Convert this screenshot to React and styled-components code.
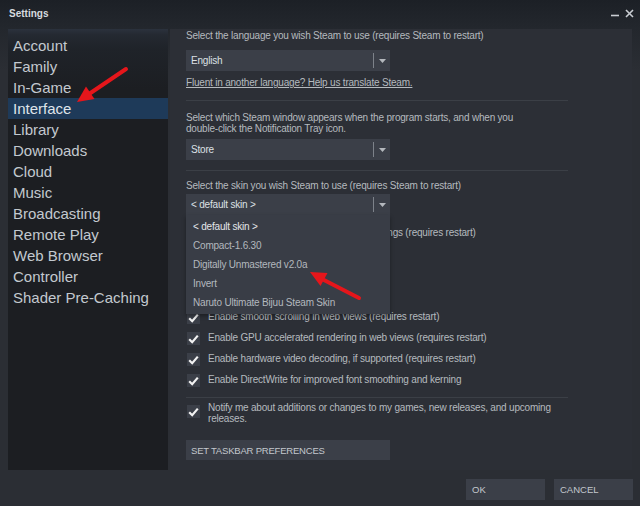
import styled, { createGlobalStyle } from 'styled-components'

const GlobalStyle = createGlobalStyle`
  html, body {
    margin: 0;
    padding: 0;
    background: #2b2e34;
  }
  body {
    font-family: "Liberation Sans", Arial, sans-serif;
  }
`

const Window = styled.div`
  position: relative;
  width: 640px;
  height: 506px;
  display: flex;
  flex-direction: column;
  overflow: hidden;
  background: linear-gradient(180deg, #1c2026 0px, #23272d 28px, #2b2e34 70px, #2b2e34 100%);
`

const TitleBar = styled.div`
  height: 29px;
  display: flex;
  align-items: center;
  justify-content: space-between;
  padding: 0 6px 3px 9px;
  box-sizing: border-box;

  .title {
    font-size: 10px;
    font-weight: bold;
    color: #d6dadf;
  }

  .controls {
    display: flex;
    align-items: center;
    gap: 6px;
  }
`

const Main = styled.div`
  display: flex;
  gap: 2px;
  height: 441px;
  padding: 0 8px;
`

const Sidebar = styled.nav`
  width: 160px;
  flex: none;
  display: flex;
  flex-direction: column;
  padding-top: 6px;
  box-sizing: border-box;
  background: linear-gradient(180deg, #2b323d 0px, #242931 6px, #1f2329 20px, #1c1e22 60px);
`

const NavItem = styled.div`
  height: 21px;
  line-height: 21px;
  padding-left: 5px;
  font-size: 15px;
  color: ${({ $active }) => ($active ? '#dfe4ea' : '#c3c9cf')};
  background: ${({ $active }) => ($active ? '#1e3a59' : 'transparent')};
`

const Content = styled.section`
  flex: 1;
  position: relative;
  padding: 1px 0 0 16px;
  background: #2c2f36;
  font-size: 10px;
  letter-spacing: -0.2px;
  color: #b5babf;
`

const Label = styled.div`
  line-height: 11px;
  max-width: 340px;
  margin-top: ${({ $mt }) => $mt || 0}px;
`

const Link = styled.div`
  margin-top: 6px;
  line-height: 11px;
  text-decoration: underline;
  color: #b5babf;
`

const Rule = styled.div`
  height: 1px;
  width: 382px;
  background: #3b3f46;
  margin-top: ${({ $mt }) => $mt}px;
`

const SelectWrap = styled.div`
  position: relative;
  width: 204px;
  margin-top: ${({ $mt }) => $mt}px;
`

const SelectBox = styled.div`
  height: 21px;
  display: flex;
  align-items: center;
  background: #3b3f48;
  color: #dde1e5;
  font-size: 10px;

  .value {
    flex: 1;
    padding-left: 5px;
  }

  .divider {
    width: 1px;
    height: 15px;
    background: #7d828a;
  }

  .arrow {
    width: 16px;
    display: flex;
    justify-content: center;
  }
`

const Menu = styled.div`
  position: absolute;
  left: 0;
  top: 100%;
  width: 204px;
  padding: 2px 0 2px;
  background: #393d46;
  box-shadow: 0 2px 4px rgba(0, 0, 0, 0.35);
  z-index: 2;
`

const MenuItem = styled.div`
  height: 19px;
  line-height: 19px;
  padding-left: 7px;
  font-size: 10px;
  color: ${({ $current }) => ($current ? '#e4e7ea' : '#b3b8be')};
`

const CheckList = styled.div`
  margin-top: 8px;
  display: flex;
  flex-direction: column;
`

const CheckRow = styled.div`
  display: flex;
  align-items: ${({ $multi }) => ($multi ? 'flex-start' : 'center')};
  gap: 8px;
  min-height: 21px;
  margin-top: ${({ $mt }) => $mt || 0}px;

  .text {
    line-height: 10.5px;
    max-width: 350px;
  }
`

const Box = styled.span`
  width: 13px;
  height: 13px;
  flex: none;
  margin-left: 1px;
  margin-top: ${({ $mt }) => $mt || 0}px;
  background: #3b3f48;
  display: flex;
  align-items: center;
  justify-content: center;
`

const WideButton = styled.div`
  width: 204px;
  height: 20px;
  margin-top: 16px;
  display: flex;
  align-items: center;
  padding-left: 5px;
  box-sizing: border-box;
  background: #3b3f48;
  color: #c3c8cd;
  font-size: 9.5px;
`

const Footer = styled.div`
  flex: 1;
  display: flex;
  justify-content: flex-end;
  align-items: flex-start;
  gap: 9px;
  padding: 9px 7px 0 0;
`

const DialogButton = styled.div`
  width: 79px;
  height: 21px;
  display: flex;
  align-items: center;
  padding-left: 6px;
  box-sizing: border-box;
  background: #3b3f48;
  color: #c3c8cd;
  font-size: 9.5px;
`

const Overlay = styled.svg`
  position: absolute;
  left: 0;
  top: 0;
  pointer-events: none;
  z-index: 5;
`

const navItems = [
  'Account', 'Family', 'In-Game', 'Interface', 'Library', 'Downloads', 'Cloud',
  'Music', 'Broadcasting', 'Remote Play', 'Web Browser', 'Controller', 'Shader Pre-Caching',
]

const skins = [
  '< default skin >',
  'Compact-1.6.30',
  'Digitally Unmastered v2.0a',
  'Invert',
  'Naruto Ultimate Bijuu Steam Skin',
]

const checks = [
  'Scale text and icons to match monitor settings (requires restart)',
  'Run Steam when my computer starts',
  'Start Steam in Big Picture Mode',
  'Display web address bars when available',
  'Enable smooth scrolling in web views (requires restart)',
  'Enable GPU accelerated rendering in web views (requires restart)',
  'Enable hardware video decoding, if supported (requires restart)',
  'Enable DirectWrite for improved font smoothing and kerning',
]

function Check() {
  return (
    <svg width="11" height="10" viewBox="0 0 11 10">
      <path d="M1.2 5.2 L4.2 8.2 L9.8 1.6" fill="none" stroke="#f2f2f2" strokeWidth="2.2" />
    </svg>
  )
}

function Select({ value, mt, children }) {
  return (
    <SelectWrap $mt={mt}>
      <SelectBox>
        <span className="value">{value}</span>
        <span className="divider" />
        <span className="arrow">
          <svg width="7" height="4" viewBox="0 0 7 4">
            <path d="M0 0 H7 L3.5 4 Z" fill="#b4b8bd" />
          </svg>
        </span>
      </SelectBox>
      {children}
    </SelectWrap>
  )
}

export default function App() {
  return (
    <>
      <GlobalStyle />
      <Window>
        <TitleBar>
          <span className="title">Settings</span>
          <span className="controls">
            <svg width="8" height="8" viewBox="0 0 8 8">
              <path d="M0 6.5 H8" stroke="#c9cdd2" strokeWidth="1.6" />
            </svg>
            <svg width="9" height="9" viewBox="0 0 9 9">
              <path d="M1 1 L8 8 M8 1 L1 8" stroke="#c9cdd2" strokeWidth="1.6" />
            </svg>
          </span>
        </TitleBar>

        <Main>
          <Sidebar>
            {navItems.map((item) => (
              <NavItem key={item} $active={item === 'Interface'}>{item}</NavItem>
            ))}
          </Sidebar>

          <Content>
            <Label>Select the language you wish Steam to use (requires Steam to restart)</Label>
            <Select value="English" mt={9} />
            <Link>Fluent in another language? Help us translate Steam.</Link>
            <Rule $mt={12} />

            <Label $mt={11}>
              Select which Steam window appears when the program starts, and when you double-click the Notification Tray icon.
            </Label>
            <Select value="Store" mt={5} />
            <Rule $mt={10} />

            <Label $mt={9}>Select the skin you wish Steam to use (requires Steam to restart)</Label>
            <Select value="< default skin >" mt={3}>
              <Menu>
                {skins.map((skin, i) => (
                  <MenuItem key={skin} $current={i === 0}>{skin}</MenuItem>
                ))}
              </Menu>
            </Select>

            <CheckList>
              {checks.map((c) => (
                <CheckRow key={c}>
                  <Box><Check /></Box>
                  <span className="text">{c}</span>
                </CheckRow>
              ))}
            </CheckList>
            <Rule $mt={6} />

            <CheckRow $multi $mt={5}>
              <Box $mt={2}><Check /></Box>
              <span className="text">
                Notify me about additions or changes to my games, new releases, and upcoming releases.
              </span>
            </CheckRow>

            <WideButton>SET TASKBAR PREFERENCES</WideButton>
          </Content>
        </Main>

        <Footer>
          <DialogButton>OK</DialogButton>
          <DialogButton>CANCEL</DialogButton>
        </Footer>

        <Overlay width="640" height="506" viewBox="0 0 640 506">
          <path d="M126 69 L89 94" stroke="#e5161b" strokeWidth="4" strokeLinecap="round" />
          <path d="M77 102 L94.5 99 L86 86.5 Z" fill="#e5161b" />
          <path d="M359 298 L322 279" stroke="#e5161b" strokeWidth="4" strokeLinecap="round" />
          <path d="M310 272 L327.5 273 L320.5 286 Z" fill="#e5161b" />
        </Overlay>
      </Window>
    </>
  )
}
